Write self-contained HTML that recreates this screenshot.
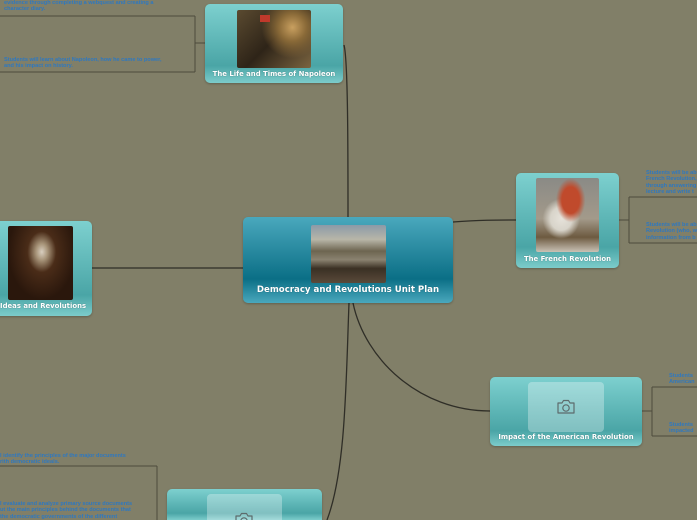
<!DOCTYPE html>
<html><head><meta charset="utf-8"><style>
html,body{margin:0;padding:0;width:697px;height:520px;overflow:hidden}
body{background:#817f68;position:relative;font-family:"Liberation Sans","DejaVu Sans",sans-serif}
.node{position:absolute;border-radius:5px;background:linear-gradient(#7dd0cf,#4aa5a6 78%,#7ccccb);box-shadow:0 1px 2px rgba(0,0,0,.25);overflow:hidden}
.central{background:linear-gradient(#4aa8bd,#0b6f86 72%,#4aa8bd)}
.lbl{position:absolute;left:0;right:0;text-align:center;color:#fff;font-weight:bold;font-size:6.9px;font-family:"DejaVu Sans",sans-serif;text-shadow:0 0 1px rgba(0,0,0,.4);white-space:nowrap}
.img{position:absolute;border-radius:2px}
.ph{position:absolute;border-radius:4px;background:rgba(255,255,255,.3)}
.t{position:absolute;color:#2f78bf;font-size:5.6px;line-height:6.4px;font-weight:bold;white-space:nowrap}
svg.lines{position:absolute;left:0;top:0}
</style></head><body>
<svg class="lines" width="697" height="520">
<g fill="none" stroke="#2f2e27" stroke-width="1.3">
<path d="M344 45 C348 60 348 150 348 217"/>
<path d="M453 222 C480 220 495 220 516 220"/>
<path d="M243 268 C190 268 130 268 92 268"/>
<path d="M353 303 C365 360 420 411 490 411"/>
<path d="M349 303 C346 380 346 470 327 520"/>
</g>
<g fill="none" stroke="#4d4b3c" stroke-width="1">
<path d="M205 43 H195 M195 16 V72 M0 16 H195 M0 72 H195"/>
<path d="M619 220 H629 M629 197 V243 M629 197 H697 M629 243 H697"/>
<path d="M642 411 H652 M652 387 V436 M652 387 H697 M652 436 H697"/>
<path d="M157 466 V520 M0 466 H157"/>
</g>
</svg>

<div class="t" style="left:4px;top:0px">evidence through completing a webquest and creating a<br>character diary.</div>
<div class="t" style="left:4px;top:57px">Students will learn about Napoleon, how he came to power,<br>and his impact on history.</div>
<div class="t" style="left:646px;top:170px">Students will be ab<br>French Revolution,<br>through answering<br>lecture and write t</div>
<div class="t" style="left:646px;top:222px">Students will be ab<br>Revolution (who, w<br>information from b</div>
<div class="t" style="left:669px;top:373px">Students<br>American</div>
<div class="t" style="left:669px;top:422px">Students<br>impacted</div>
<div class="t" style="left:0px;top:453px">l identify the principles of the major documents<br>rith democratic ideals.</div>
<div class="t" style="left:0px;top:501px">l evaluate and analyze primary source documents<br>ut the main principles behind the documents that<br>the democratic governments of the different</div>

<div class="node" style="left:205px;top:4px;width:138px;height:79px">
<div class="img" style="left:32px;top:6px;width:74px;height:58px;background:radial-gradient(circle at 75% 30%,#c9a060 0,#8a6a38 20%,transparent 45%),linear-gradient(135deg,#5a4a30,#2e2418 50%,#7b6440)"><div style="position:absolute;left:23px;top:5px;width:10px;height:7px;background:#c0392b"></div></div>
<div class="lbl" style="top:66px">The Life and Times of Napoleon</div>
</div>

<div class="node central" style="left:243px;top:217px;width:210px;height:86px">
<div class="img" style="left:68px;top:8px;width:75px;height:58px;background:linear-gradient(#8b9aa8,#b8b6a8 25%,#6d6550 45%,#8a8270 60%,#3a3024 75%,#5a4a3a)"></div>
<div class="lbl" style="top:68px;font-size:8.6px">Democracy and Revolutions Unit Plan</div>
</div>

<div class="node" style="left:516px;top:173px;width:103px;height:95px">
<div class="img" style="left:20px;top:5px;width:63px;height:74px;background:radial-gradient(ellipse at 55% 30%,#c04a2c 0,#c04a2c 18%,transparent 30%),radial-gradient(ellipse at 40% 55%,#e6e2da 0,#d8d4ca 20%,transparent 35%),linear-gradient(#8a8a86,#a39a8a 55%,#6d5a40 80%,#c9c2b5)"></div>
<div class="lbl" style="top:82px">The French Revolution</div>
</div>

<div class="node" style="left:-10px;top:221px;width:102px;height:95px">
<div class="img" style="left:18px;top:5px;width:65px;height:74px;background:radial-gradient(ellipse at 52% 35%,#d9cfc0 0,#a8957a 12%,#4a2c18 30%,#2a170c 70%)"></div>
<div class="lbl" style="top:81px;left:10px;right:auto">Ideas and Revolutions</div>
</div>

<div class="node" style="left:490px;top:377px;width:152px;height:69px">
<div class="ph" style="left:38px;top:5px;width:76px;height:50px">
<svg width="20" height="16" viewBox="0 0 20 16" style="position:absolute;left:28px;top:17px"><path d="M2 4 H6 L7.5 1.5 H12.5 L14 4 H18 V14 H2 Z" fill="none" stroke="#5d6b6c" stroke-width="1.2" stroke-linejoin="round"/><circle cx="10" cy="9" r="3.2" fill="none" stroke="#5d6b6c" stroke-width="1.2"/></svg>
</div>
<div class="lbl" style="top:56px">Impact of the American Revolution</div>
</div>

<div class="node" style="left:167px;top:489px;width:155px;height:31px;border-radius:5px 5px 0 0">
<div class="ph" style="left:40px;top:5px;width:75px;height:40px">
<svg width="20" height="16" viewBox="0 0 20 16" style="position:absolute;left:27px;top:18px"><path d="M2 4 H6 L7.5 1.5 H12.5 L14 4 H18 V14 H2 Z" fill="none" stroke="#5d6b6c" stroke-width="1.2" stroke-linejoin="round"/><circle cx="10" cy="9" r="3.2" fill="none" stroke="#5d6b6c" stroke-width="1.2"/></svg>
</div>
</div>
</body></html>
